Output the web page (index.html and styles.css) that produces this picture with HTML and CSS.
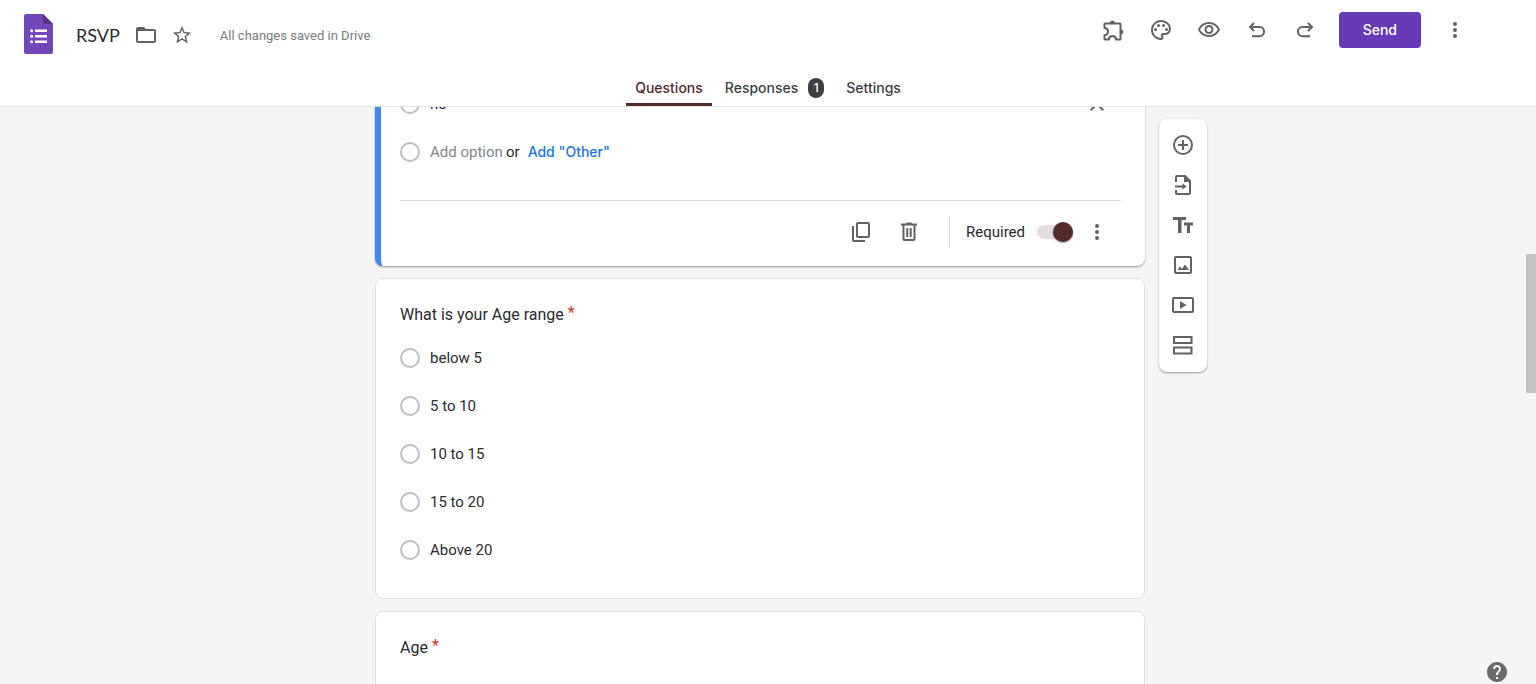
FILE: index.html
```html
<!DOCTYPE html>
<html lang="en">
<head>
    <meta charset="UTF-8">
    <meta name="viewport" content="width=device-width, initial-scale=1.0">
    <title>RSVP - Google Forms</title>
    <link rel="stylesheet" href="styles.css">
</head>
<body>
    <header class="header">
        <div class="header-top">
            <div class="header-left">
                <a class="logo" href="#" aria-label="Forms home">
                    <svg width="29" height="40" viewBox="0 0 29 40">
                        <path fill="#7248b9" d="M2 0h17l10 10v28a2 2 0 0 1-2 2H2a2 2 0 0 1-2-2V2a2 2 0 0 1 2-2z"/>
                        <path fill="#563391" d="M19 0l10 10H21a2 2 0 0 1-2-2z"/>
                        <path fill="#fff" d="M11 15.500h12v2.400H11zM11 21h12v2.400H11zM11 26.500h12v2.400H11z"/>
                        <circle cx="7.600" cy="16.700" r="1.500" fill="#fff"/>
                        <circle cx="7.600" cy="22.200" r="1.500" fill="#fff"/>
                        <circle cx="7.600" cy="27.700" r="1.500" fill="#fff"/>
                    </svg>
                </a>
                <h1 class="form-name">RSVP</h1>
                <button class="title-btn" type="button" aria-label="Move to folder">
                    <svg class="icon" viewBox="0 0 24 24"><path d="M20 6h-8l-2-2H4c-1.100 0-2 .9-2 2v12c0 1.100.9 2 2 2h16c1.100 0 2-.9 2-2V8c0-1.100-.9-2-2-2zm0 12H4V8h16v10z"/></svg>
                </button>
                <button class="title-btn" type="button" aria-label="Star">
                    <svg class="icon icon-star" viewBox="0 0 24 24"><path d="M22 9.240l-7.190-.62L12 2 9.190 8.630 2 9.240l5.460 4.730L5.820 21 12 17.270 18.180 21l-1.630-7.030L22 9.240zM12 15.400l-3.760 2.270 1-4.280-3.320-2.880 4.380-.38L12 6.100l1.710 4.040 4.380.38-3.320 2.880 1 4.280L12 15.400z"/></svg>
                </button>
                <span class="save-status">All changes saved in Drive</span>
            </div>
            <div class="header-right">
                <button class="icon-btn" type="button" aria-label="Add-ons">
                    <svg class="icon" viewBox="0 0 24 24">
                        <path class="line" d="M4 5.500h15a.5.5 0 0 1 .5.5v15a.5.5 0 0 1-.5.5h-3.700c-.3-2.100-1.800-3.500-3.800-3.500s-3.500 1.400-3.800 3.500H4a.5.5 0 0 1-.5-.5v-3.700c2.100-.3 3.500-1.800 3.500-3.800s-1.400-3.500-3.500-3.800V6a.5.5 0 0 1 .5-.5z"/>
                        <path d="M9 5a2.400 2.400 0 0 1 4.800 0zM20 11.500a2.400 2.400 0 0 1 0 4.800z"/>
                    </svg>
                </button>
                <button class="icon-btn" type="button" aria-label="Customize theme">
                    <svg class="icon" viewBox="0 0 24 24">
                        <path d="M12 22C6.490 22 2 17.510 2 12S6.490 2 12 2s10 4.040 10 9c0 3.310-2.690 6-6 6h-1.770c-.28 0-.5.22-.5.5 0 .12.05.23.13.33.41.47.64 1.060.64 1.670 0 1.380-1.120 2.500-2.500 2.500zm0-18c-4.410 0-8 3.590-8 8s3.590 8 8 8c.28 0 .5-.22.5-.5 0-.16-.08-.28-.14-.35-.41-.46-.63-1.050-.63-1.650 0-1.380 1.120-2.500 2.500-2.500H16c2.210 0 4-1.790 4-4 0-3.860-3.590-7-8-7z"/>
                        <circle cx="6.500" cy="11.500" r="1.500"/><circle cx="9.500" cy="7.500" r="1.500"/><circle cx="14.500" cy="7.500" r="1.500"/><circle cx="17.500" cy="11.500" r="1.500"/>
                    </svg>
                </button>
                <button class="icon-btn" type="button" aria-label="Preview">
                    <svg class="icon" viewBox="0 0 24 24"><path d="M12 6c3.790 0 7.170 2.130 8.820 5.500C19.170 14.870 15.790 17 12 17s-7.170-2.130-8.820-5.500C4.830 8.130 8.210 6 12 6m0-2C7 4 2.730 7.110 1 11.500 2.730 15.890 7 19 12 19s9.270-3.110 11-7.500C21.270 7.110 17 4 12 4zm0 5c1.380 0 2.500 1.120 2.500 2.500S13.380 14 12 14s-2.500-1.120-2.500-2.500S10.620 9 12 9m0-2c-2.480 0-4.500 2.020-4.500 4.500S9.520 16 12 16s4.500-2.020 4.500-4.500S14.480 7 12 7z"/></svg>
                </button>
                <button class="icon-btn" type="button" aria-label="Undo">
                    <svg class="icon" viewBox="0 0 24 24"><path class="line" d="M9 5L5 9l4 4M5 9h9.500a4.600 4.600 0 0 1 0 9.200H7"/></svg>
                </button>
                <button class="icon-btn" type="button" aria-label="Redo">
                    <svg class="icon" viewBox="0 0 24 24"><path class="line" d="M15 5l4 4-4 4M19 9H9.500a4.600 4.600 0 0 0 0 9.200H17"/></svg>
                </button>
                <button class="send-btn" type="button">Send</button>
                <button class="icon-btn" type="button" aria-label="More">
                    <svg class="icon" viewBox="0 0 24 24"><circle cx="12" cy="6" r="2"/><circle cx="12" cy="12" r="2"/><circle cx="12" cy="18" r="2"/></svg>
                </button>
            </div>
        </div>
        <nav class="tabs">
            <a class="tab active" href="#questions">Questions</a>
            <a class="tab" href="#responses">Responses <span class="badge">1</span></a>
            <a class="tab" href="#settings">Settings</a>
        </nav>
    </header>

    <main class="workspace">
        <div class="cards">
            <!-- Question being edited -->
            <section class="card card-active">
                <div class="option">
                    <input type="radio" id="opt-no" name="attend" aria-label="no" disabled>
                    <input class="option-text" type="text" value="no" aria-label="Option value">
                    <button class="icon-btn" type="button" aria-label="Remove option">
                        <svg class="icon" viewBox="0 0 24 24"><path d="M19 6.410L17.590 5 12 10.590 6.410 5 5 6.410 10.590 12 5 17.590 6.410 19 12 13.410 17.590 19 19 17.590 13.410 12z"/></svg>
                    </button>
                </div>
                <div class="option">
                    <input type="radio" id="opt-add" name="attend" disabled aria-label="New option">
                    <input class="add-option" type="text" placeholder="Add option" aria-label="Add option">
                    <span class="or">or</span>
                    <button class="add-other" type="button">Add "Other"</button>
                </div>
                <div class="card-footer">
                    <button class="icon-btn" type="button" aria-label="Duplicate">
                        <svg class="icon" viewBox="0 0 24 24"><path class="line" d="M9 3h10a1 1 0 0 1 1 1v12a1 1 0 0 1-1 1H9a1 1 0 0 1-1-1V4a1 1 0 0 1 1-1zM4 6v14a1 1 0 0 0 1 1h11"/></svg>
                    </button>
                    <button class="icon-btn" type="button" aria-label="Delete">
                        <svg class="icon" viewBox="0 0 24 24"><path class="line" d="M4 4.500h16M9.500 3.500h5M6.500 5v14a1 1 0 0 0 1 1h9a1 1 0 0 0 1-1V5M10.300 8v9M13.700 8v9"/></svg>
                    </button>
                    <span class="divider"></span>
                    <label class="required-label" for="required">Required</label>
                    <input class="toggle" type="checkbox" id="required" checked>
                    <button class="icon-btn" type="button" aria-label="More options">
                        <svg class="icon" viewBox="0 0 24 24"><circle cx="12" cy="6" r="2"/><circle cx="12" cy="12" r="2"/><circle cx="12" cy="18" r="2"/></svg>
                    </button>
                </div>
            </section>

            <!-- Age range -->
            <section class="card">
                <h2 class="question">What is your Age range <span class="star">*</span></h2>
                <div class="option">
                    <input type="radio" id="age1" name="age">
                    <label for="age1">below 5</label>
                </div>
                <div class="option">
                    <input type="radio" id="age2" name="age">
                    <label for="age2">5 to 10</label>
                </div>
                <div class="option">
                    <input type="radio" id="age3" name="age">
                    <label for="age3">10 to 15</label>
                </div>
                <div class="option">
                    <input type="radio" id="age4" name="age">
                    <label for="age4">15 to 20</label>
                </div>
                <div class="option">
                    <input type="radio" id="age5" name="age">
                    <label for="age5">Above 20</label>
                </div>
            </section>

            <!-- Age -->
            <section class="card">
                <h2 class="question">Age <span class="star">*</span></h2>
            </section>
        </div>

        <aside class="toolbar">
            <button class="tool-btn" type="button" aria-label="Add question">
                <svg class="icon" viewBox="0 0 24 24"><circle class="line" cx="12" cy="12" r="9"/><path class="line" d="M12 7v10M7 12h10"/></svg>
            </button>
            <button class="tool-btn" type="button" aria-label="Import questions">
                <svg class="icon" viewBox="0 0 24 24"><path class="line" d="M5 9V4a1 1 0 0 1 1-1h8l5 5v12a1 1 0 0 1-1 1H6a1 1 0 0 1-1-1v-3M4 13.500h8"/><path d="M13 2.500V9h6.500zM11.500 10.300v6.400l4-3.200z"/></svg>
            </button>
            <button class="tool-btn" type="button" aria-label="Add title and description">
                <svg class="icon" viewBox="0 0 24 24"><path d="M2 4v3h5v13h3.500V7h4.500V4zM22 9.500h-9v3h3V20h3v-7.500h3z"/></svg>
            </button>
            <button class="tool-btn" type="button" aria-label="Add image">
                <svg class="icon" viewBox="0 0 24 24"><rect class="line" x="4" y="4" width="16" height="16" rx="1"/><path d="M6.500 17l2.500-3.500 2 2.200 3-4.200 4 5.500z"/></svg>
            </button>
            <button class="tool-btn" type="button" aria-label="Add video">
                <svg class="icon" viewBox="0 0 24 24"><rect class="line" x="2" y="5" width="20" height="14" rx="1"/><path d="M9 8v8l6.500-4z"/></svg>
            </button>
            <button class="tool-btn" type="button" aria-label="Add section">
                <svg class="icon" viewBox="0 0 24 24"><path class="line" d="M3 4h17.500v6H3zM3 14.500h17.500v6H3z"/></svg>
            </button>
        </aside>

        <div class="scroll-thumb"></div>
        <button class="help-btn" type="button" aria-label="Help">
            <svg class="icon" viewBox="0 0 24 24"><circle cx="12" cy="12" r="9" fill="#fff"/><path d="M12 2C6.480 2 2 6.480 2 12s4.480 10 10 10 10-4.480 10-10S17.520 2 12 2zm1 17h-2v-2h2v2zm2.070-7.750l-.9.920C13.450 12.900 13 13.500 13 15h-2v-.5c0-1.100.45-2.100 1.170-2.830l1.240-1.260c.37-.36.59-.86.59-1.410 0-1.100-.9-2-2-2s-2 .9-2 2H8c0-2.210 1.790-4 4-4s4 1.790 4 4c0 .88-.36 1.680-.93 2.250z"/></svg>
        </button>
    </main>
</body>
</html>
```
FILE: styles.css
```css
* {
    margin: 0;
    padding: 0;
    box-sizing: border-box;
}

body {
    font-family: Roboto, Arial, sans-serif;
    font-size: 15px;
    color: #2a2b2e;
    background: #f6f5f3;
    height: 100vh;
    display: flex;
    flex-direction: column;
    overflow: hidden;
}

button {
    border: none;
    background: none;
    cursor: pointer;
    font-family: inherit;
}

a {
    color: inherit;
    text-decoration: none;
}

.icon {
    display: block;
    width: 24px;
    height: 24px;
    fill: #5f6368;
}

.icon-star {
    width: 22px;
    height: 22px;
}

.icon .line {
    fill: none;
    stroke: #5f6368;
    stroke-width: 2;
}

.icon-btn {
    width: 48px;
    height: 36px;
    display: flex;
    align-items: center;
    justify-content: center;
    flex-shrink: 0;
}

/* Header */
.header {
    background: white;
    border-bottom: 1px solid #e3e3e6;
    flex-shrink: 0;
}

.header-top {
    display: flex;
    justify-content: space-between;
    align-items: flex-start;
    height: 70px;
    padding: 12px 57px 0 24px;
}

.header-left,
.header-right {
    display: flex;
    align-items: center;
}

.header-left {
    height: 46px;
}

.logo {
    height: 42px;
}

.logo svg {
    display: block;
}

.form-name {
    font-family: Lato, sans-serif;
    font-size: 18px;
    font-weight: 400;
    margin: 0 14px 0 23px;
}

.title-btn {
    width: 24px;
    height: 24px;
    display: flex;
    align-items: center;
    justify-content: center;
    margin-right: 12px;
}

.save-status {
    font-size: 13px;
    color: #777a7e;
    margin-left: 14px;
}

.send-btn {
    height: 36px;
    padding: 0 24px 2px;
    margin: 0 10px;
    border-radius: 4px;
    background: #673ab7;
    color: white;
    font-family: Inter, sans-serif;
    font-size: 14px;
    font-weight: 500;
}

.tabs {
    display: flex;
    justify-content: center;
    gap: 4px;
    height: 36px;
}

.tab {
    display: flex;
    align-items: center;
    padding: 2px 9px 0;
    font-family: Inter, sans-serif;
    font-size: 14px;
    font-weight: 500;
    color: #3c4043;
    border-bottom: 3px solid transparent;
}

.tab.active {
    color: #552a2a;
    border-bottom-color: #552a2a;
    border-radius: 3px 3px 0 0;
}

.badge {
    width: 16px;
    height: 20px;
    line-height: 20px;
    margin-left: 10px;
    border-radius: 8px;
    background: #3c4043;
    color: white;
    font-size: 12px;
    text-align: center;
}

/* Form editor */
.workspace {
    flex: 1;
    min-height: 0;
    overflow: hidden;
    position: relative;
    display: grid;
    grid-template-columns: 1fr minmax(0, 770px) 1fr;
    align-items: start;
    padding-right: 16px;
}

/* the list is scrolled part of the way into the active card */
.cards {
    grid-column: 2;
    display: flex;
    flex-direction: column;
    gap: 12px;
    margin-top: -52px;
}

.card {
    background: white;
    border: 1px solid #dfe1e5;
    border-radius: 8px;
    padding: 24px;
}

.card-active {
    border: none;
    border-left: 6px solid #4285f4;
    padding: 25px 24px 0 19px;
    box-shadow: 0 1px 2px rgba(0, 0, 0, 0.4);
}

.question {
    font-size: 16px;
    font-weight: 400;
    line-height: 24px;
    margin-bottom: 7px;
}

.star {
    color: #d93025;
    line-height: 1;
    vertical-align: 2px;
}

.option {
    display: flex;
    align-items: center;
    height: 48px;
}

.option input[type="radio"] {
    appearance: none;
    width: 20px;
    height: 20px;
    border: 2px solid #bdbdbd;
    border-radius: 50%;
    margin-right: 10px;
    flex-shrink: 0;
}

.option-text,
.add-option {
    border: none;
    outline: none;
    background: none;
    font-family: inherit;
    font-size: 15px;
    color: inherit;
}

.option-text {
    flex: 1;
}

.add-option {
    width: 72px;
}

.add-option::placeholder {
    color: #80868b;
}

.or {
    margin: 0 8px 0 4px;
}

.add-other {
    padding-bottom: 2px;
    color: #1a73e8;
    font-family: Inter, sans-serif;
    font-size: 14px;
    font-weight: 500;
}

.card-footer {
    display: flex;
    align-items: center;
    justify-content: flex-end;
    height: 66px;
    margin-top: 24px;
    padding-bottom: 4px;
    border-top: 1px solid #dadce0;
}

.divider {
    width: 1px;
    height: 32px;
    margin: 0 16px;
    background: #dadce0;
}

.toggle {
    appearance: none;
    display: flex;
    align-items: center;
    width: 36px;
    height: 14px;
    margin-left: 12px;
    border-radius: 7px;
    background: #e4dddd;
    cursor: pointer;
}

.toggle::before {
    content: "";
    width: 20px;
    height: 20px;
    flex-shrink: 0;
    border-radius: 50%;
    background: #757575;
    box-shadow: 0 1px 2px rgba(0, 0, 0, 0.4);
}

.toggle:checked {
    justify-content: flex-end;
}

.toggle:checked::before {
    background: #552a2a;
}

/* Side toolbar */
.toolbar {
    grid-column: 3;
    width: 48px;
    margin: 12px 0 0 14px;
    padding: 6px 0 7px;
    background: white;
    border-radius: 8px;
    box-shadow: 0 1px 2px rgba(60, 64, 67, 0.5);
}

.tool-btn {
    width: 48px;
    height: 40px;
    display: flex;
    align-items: center;
    justify-content: center;
}

.scroll-thumb {
    position: absolute;
    top: 147px;
    right: 0;
    width: 10px;
    height: 139px;
    background: #c4c3c1;
}

.help-btn {
    position: absolute;
    right: 27px;
    bottom: 0;
}

.help-btn .icon {
    fill: #6b6b6b;
}
```
